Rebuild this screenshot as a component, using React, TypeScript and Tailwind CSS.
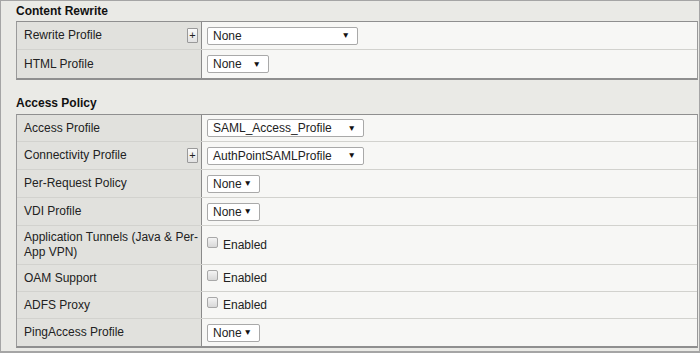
import React from "react";

type Cell =
  | { kind: "select"; value: string; width: number }
  | { kind: "check" };

type Row = { label: React.ReactNode; plus?: boolean; cell: Cell; h: number };

function Select({ value, width }: { value: string; width: number }) {
  return (
    <div
      className="flex h-[18px] items-center justify-between rounded-[2px] border border-[#a9a9a9] bg-white pl-[5px] pr-[7px] text-[12px] text-[#222]"
      style={{ width }}
    >
      <span>{value}</span>
      <span className="text-[8.5px] leading-none text-[#111]">▼</span>
    </div>
  );
}

function Check() {
  return (
    <div className="flex items-center">
      <div className="mt-[-6px] h-[11px] w-[11px] rounded-[2px] border border-[#a8a8a8] bg-gradient-to-b from-[#f4f4f4] to-[#d8d8d8]" />
      <span className="ml-[5px] text-[12px] text-[#222]">Enabled</span>
    </div>
  );
}

function Plus() {
  return (
    <div className="flex h-[15px] w-[11px] items-center justify-center rounded-[1px] border border-[#999] bg-gradient-to-b from-[#fbfbfb] to-[#e2e2e2] text-[11px] leading-none text-[#222]">
      +
    </div>
  );
}

function Table({ rows }: { rows: Row[] }) {
  return (
    <div className="border-x border-t border-b-2 border-x-[#9a9a9a] border-t-[#8f8f8f] border-b-[#8f8f8f]">
      {rows.map((r, i) => (
        <div
          key={i}
          className={`flex ${i < rows.length - 1 ? "border-b border-[#d2d2ce]" : ""}`}
          style={{ height: r.h }}
        >
          <div className="flex w-[185px] shrink-0 items-center justify-between border-r border-[#8a8a8a] bg-[#e1e1dd] pl-[7px] pr-[3px] text-[12px] leading-[15px] whitespace-nowrap text-[#222]">
            <span>{r.label}</span>
            {r.plus && <Plus />}
          </div>
          <div className="flex flex-1 items-center bg-[#f7f7f5] pl-[5px]">
            {r.cell.kind === "select" ? (
              <Select value={r.cell.value} width={r.cell.width} />
            ) : (
              <Check />
            )}
          </div>
        </div>
      ))}
    </div>
  );
}

export default function App() {
  const t1: Row[] = [
    { label: "Rewrite Profile", plus: true, cell: { kind: "select", value: "None", width: 151 }, h: 28 },
    { label: "HTML Profile", cell: { kind: "select", value: "None", width: 62 }, h: 28 },
  ];
  const t2: Row[] = [
    { label: "Access Profile", cell: { kind: "select", value: "SAML_Access_Profile", width: 157 }, h: 27 },
    { label: "Connectivity Profile", plus: true, cell: { kind: "select", value: "AuthPointSAMLProfile", width: 157 }, h: 28 },
    { label: "Per-Request Policy", cell: { kind: "select", value: "None", width: 53 }, h: 28 },
    { label: "VDI Profile", cell: { kind: "select", value: "None", width: 53 }, h: 28 },
    {
      label: (
        <>
          Application Tunnels (Java &amp; Per-
          <br />
          App VPN)
        </>
      ),
      cell: { kind: "check" },
      h: 39,
    },
    { label: "OAM Support", cell: { kind: "check" }, h: 27 },
    { label: "ADFS Proxy", cell: { kind: "check" }, h: 27 },
    { label: "PingAccess Profile", cell: { kind: "select", value: "None", width: 53 }, h: 27 },
  ];
  return (
    <div
      className="h-[353px] w-[700px] overflow-hidden border border-b-2 border-[#a5a5a5] bg-[#eaeae6] pl-[15px] pr-[1px]"
      style={{ fontFamily: '"Liberation Sans", Arial, sans-serif' }}
    >
      <div className="flex h-[20px] items-center text-[12px] font-bold text-[#111]">Content Rewrite</div>
      <Table rows={t1} />
      <div className="mt-[12px] flex h-[22px] items-center text-[12px] font-bold text-[#111]">Access Policy</div>
      <Table rows={t2} />
    </div>
  );
}
